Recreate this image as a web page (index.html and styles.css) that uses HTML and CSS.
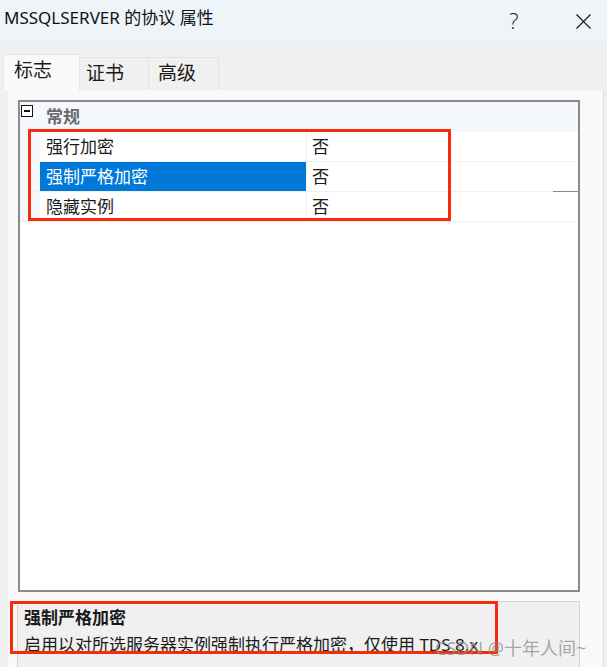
FILE: index.html
```html
<!DOCTYPE html>
<html lang="zh-CN">
<head>
<meta charset="utf-8">
<title>MSSQLSERVER 的协议 属性</title>
<link rel="stylesheet" href="styles.css">
</head>
<body>
<div class="window">
  <div class="titlebar">
    <span class="title">MSSQLSERVER 的协议 属性</span>
    <span class="help">?</span>
    <span class="close"><svg width="15" height="15" viewBox="0 0 15 15"><path d="M0.5 0.5 L14.5 14.5 M14.5 0.5 L0.5 14.5" stroke="#1a1a1a" stroke-width="1.2" fill="none"/></svg></span>
  </div>
  <div class="tabs">
    <div class="tab tab-active t1">标志</div>
    <div class="tab t2">证书</div>
    <div class="tab t3">高级</div>
  </div>
  <div class="panel">
    <div class="grid">
      <div class="cat">
        <div class="gutter-cat"><span class="toggle"></span></div>
        <span class="cat-name">常规</span>
      </div>
      <div class="row">
        <div class="gutter"></div>
        <div class="name">强行加密</div>
        <div class="value">否</div>
      </div>
      <div class="row">
        <div class="gutter"></div>
        <div class="name name-selected">强制严格加密</div>
        <div class="value">否</div>
      </div>
      <div class="row">
        <div class="gutter"></div>
        <div class="name">隐藏实例</div>
        <div class="value">否</div>
      </div>
    </div>
    <div class="desc">
      <div class="desc-title">强制严格加密</div>
      <div class="desc-text">启用以对所选服务器实例强制执行严格加密，仅使用 TDS 8.x</div>
    </div>
  </div>
  <div class="tick"></div>
  <div class="mark mark-grid"></div>
  <div class="mark mark-desc"></div>
  <div class="watermark">CSDN @十年人间~</div>
</div>
</body>
</html>
```
FILE: styles.css
```css
html, body {
  margin: 0;
  padding: 0;
  background: #f0f0f0;
}
body {
  font-family: "Noto Sans", "Noto Sans CJK SC", sans-serif;
  color: #1a1a1a;
}
.window {
  position: relative;
  width: 607px;
  height: 667px;
  overflow: hidden;
  background: #f0f0f0;
}
.titlebar {
  height: 40px;
  background: #eff4f9;
  display: flex;
  align-items: center;
  box-sizing: border-box;
  padding-bottom: 4px;
}
.title {
  flex: 1;
  padding-left: 4px;
  font-size: 17px;
  line-height: 24px;
  color: #111;
}
.help {
  width: 14px;
  text-align: center;
  font-family: "Open Sans", "Noto Sans", sans-serif;
  font-size: 22px;
  font-weight: 300;
  line-height: 24px;
  color: #222;
  padding-top: 4px;
}
.close {
  margin-left: 55px;
  margin-right: 16px;
  display: flex;
  padding-top: 6px;
}
.tabs {
  margin-top: 14px;
  height: 36px;
  display: flex;
  align-items: flex-end;
  padding-left: 3px;
}
.tab {
  box-sizing: border-box;
  height: 33px;
  font-size: 19px;
  line-height: 31px;
  border: 1px solid #e2e2e2;
  border-bottom: none;
  background: #f0f0f0;
  color: #1a1a1a;
}
.tab-active {
  height: 36px;
  line-height: 31px;
  background: #f9f9f9;
  border-color: #e6e6e6;
}
.t1 { width: 77px; padding-left: 10px; }
.t2 { width: 69px; padding-left: 6px; border-left: none; }
.t3 { width: 70px; padding-left: 9px; border-left: none; }
.panel {
  margin-left: 8px;
  width: 596px;
  height: 577px;
  box-sizing: border-box;
  background: #f9f9f9;
  border-right: 1px solid #dedede;
  padding-top: 10px;
  padding-left: 10px;
}
.grid {
  box-sizing: border-box;
  width: 562px;
  height: 492px;
  border: 2px solid #8b8b8b;
  background: #ffffff;
}
.cat {
  height: 30px;
  background: #f4f7fc;
  display: flex;
  align-items: center;
}
.gutter-cat {
  width: 26px;
  height: 30px;
  position: relative;
}
.toggle {
  position: absolute;
  left: 1px;
  top: 3px;
  width: 10px;
  height: 10px;
  border: 1.5px solid #111;
  background: #fff;
}
.toggle::after {
  content: "";
  position: absolute;
  left: 2px;
  right: 2px;
  top: 4px;
  height: 1.5px;
  background: #111;
}
.cat-name {
  font-size: 17px;
  font-weight: 600;
  color: #6b6b6b;
  line-height: 30px;
}
.row {
  height: 30px;
  display: flex;
  box-sizing: border-box;
  border-bottom: 1px solid #f0f0f0;
}
.gutter {
  width: 20px;
  background: #f4f7fc;
}
.name {
  width: 267px;
  box-sizing: border-box;
  padding-left: 6px;
  font-size: 17px;
  line-height: 29px;
  border-right: 1px solid #f0f0f0;
  color: #1a1a1a;
}
.name-selected {
  background: #0078d7;
  color: #ffffff;
}
.value {
  flex: 1;
  padding-left: 5px;
  font-size: 17px;
  line-height: 29px;
}
.desc {
  margin-top: 9px;
  margin-left: -1px;
  width: 563px;
  height: 80px;
  box-sizing: border-box;
  background: #f0f0f0;
  border: 1px solid #d4d4d4;
  border-bottom: none;
  padding-top: 3px;
  padding-left: 6px;
}
.desc-title {
  font-size: 17px;
  font-weight: 700;
  line-height: 26px;
}
.desc-text {
  font-size: 17px;
  line-height: 28px;
  white-space: nowrap;
}
.tick {
  position: absolute;
  left: 553px;
  top: 191px;
  width: 26px;
  height: 1px;
  background: #8b8b8b;
}
.mark {
  position: absolute;
  box-sizing: border-box;
  border: 3px solid #f72b0c;
}
.mark-grid {
  left: 28px;
  top: 129px;
  width: 423px;
  height: 92px;
}
.mark-desc {
  left: 10px;
  top: 601px;
  width: 488px;
  height: 53px;
}
.watermark {
  position: absolute;
  left: 435px;
  top: 636px;
  font-size: 18px;
  line-height: 24px;
  color: rgba(140, 140, 140, 0.75);
  white-space: nowrap;
}
```
